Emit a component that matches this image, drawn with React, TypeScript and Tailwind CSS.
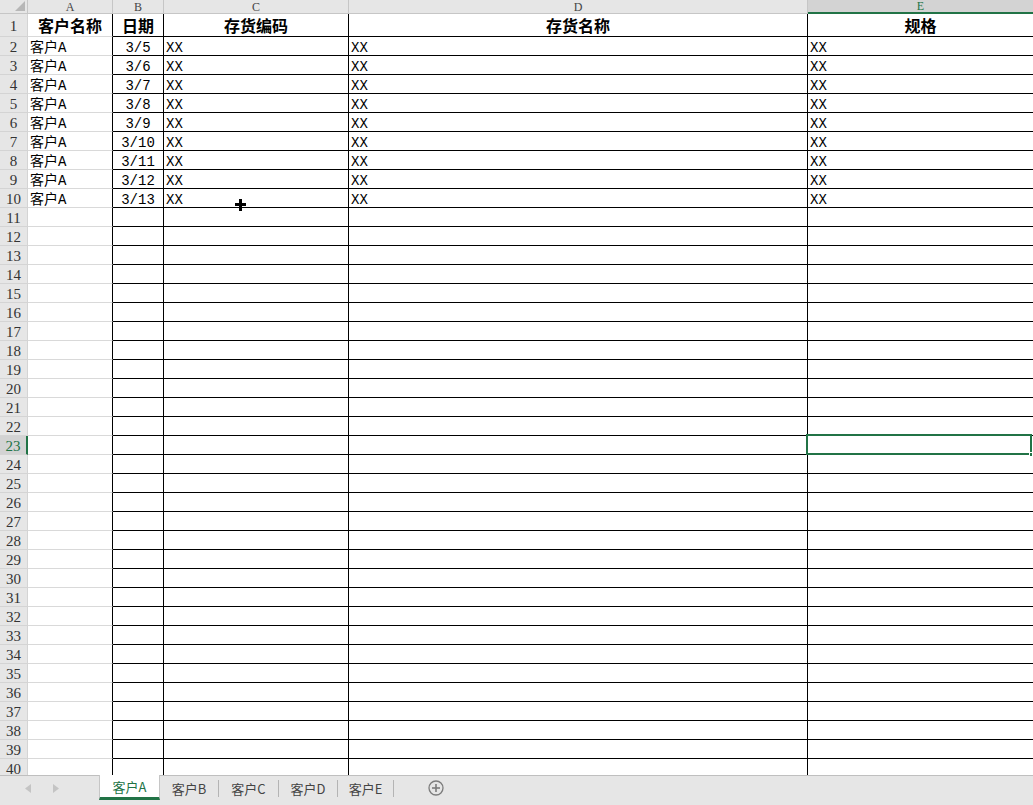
import React from "react";

function HeaderRow() {
  const cols = [
    { l: "A", w: "w-[85px]" },
    { l: "B", w: "w-[51px]" },
    { l: "C", w: "w-[185px]" },
    { l: "D", w: "w-[459px]" },
  ];
  return (
    <div className="flex h-[14px] shrink-0">
      <div className="relative w-[28px] h-full shrink-0 bg-[#e6e6e6] border-r border-b border-[#c6c6c6]">
        <svg className="absolute right-[2px] bottom-[2px]" width="10" height="10" viewBox="0 0 10 10">
          <polygon points="10,0 10,10 0,10" fill="#b7b7b7" />
        </svg>
      </div>
      {cols.map((c) => (
        <div
          key={c.l}
          className={`${c.w} h-full shrink-0 bg-[#e6e6e6] border-r border-b border-[#c6c6c6] flex items-center justify-center text-[12px] leading-none text-[#444] font-['Liberation_Serif',serif]`}
        >
          {c.l}
        </div>
      ))}
      <div className="flex-1 h-full bg-[#d3d3d3] border-b-2 border-[#217346] flex items-center justify-center text-[12px] leading-none text-[#217346] font-['Liberation_Serif',serif]">
        E
      </div>
    </div>
  );
}

const cellFont = "font-['Liberation_Mono','Noto_Sans_CJK_SC',monospace]";

function TitleRow() {
  const bold = "font-bold text-[16px] leading-none font-['Noto_Sans_CJK_SC',sans-serif] text-black";
  return (
    <div className="flex h-[23px] shrink-0">
      <div className="w-[28px] h-full shrink-0 bg-[#e6e6e6] border-r border-b border-[#d4d4d4] flex items-center justify-center pt-[3px] text-[15px] leading-none text-[#333] font-['Liberation_Serif',serif]">
        1
      </div>
      <div className={`w-[85px] h-full shrink-0 border-r border-r-black border-b border-b-[#d9d9d9] flex items-center justify-center ${bold}`}>
        客户名称
      </div>
      <div className={`w-[51px] h-full shrink-0 border-r border-b border-black flex items-center justify-center ${bold}`}>
        日期
      </div>
      <div className={`w-[185px] h-full shrink-0 border-r border-b border-black flex items-center justify-center ${bold}`}>
        存货编码
      </div>
      <div className={`w-[459px] h-full shrink-0 border-r border-b border-black flex items-center justify-center ${bold}`}>
        存货名称
      </div>
      <div className={`flex-1 h-full border-b border-black flex items-center justify-center ${bold}`}>
        规格
      </div>
    </div>
  );
}

function DataRow({ r }: { r: number }) {
  const has = r <= 10;
  const sel = r === 23;
  return (
    <div className="flex h-[19px] shrink-0">
      <div
        className={`w-[28px] h-full shrink-0 border-b border-[#d4d4d4] flex items-center justify-center pt-[3px] text-[15px] leading-none font-['Liberation_Serif',serif] ${
          sel ? "bg-[#d3d3d3] border-r-2 border-r-[#217346] text-[#217346]" : "bg-[#e6e6e6] border-r text-[#333]"
        }`}
      >
        {r}
      </div>
      <div className={`w-[85px] h-full shrink-0 border-r border-r-black border-b border-b-[#d9d9d9] flex items-center pl-[2px] pt-[3px] text-[14px] leading-none text-black ${cellFont}`}>
        {has ? "客户A" : ""}
      </div>
      <div className={`w-[51px] h-full shrink-0 border-r border-b border-black flex items-center justify-center pt-[3px] text-[14px] leading-none text-black ${cellFont}`}>
        {has ? `3/${r + 3}` : ""}
      </div>
      <div className={`w-[185px] h-full shrink-0 border-r border-b border-black flex items-center pl-[2px] pt-[3px] text-[14px] leading-none text-black ${cellFont}`}>
        {has ? "XX" : ""}
      </div>
      <div className={`w-[459px] h-full shrink-0 border-r border-b border-black flex items-center pl-[2px] pt-[3px] text-[14px] leading-none text-black ${cellFont}`}>
        {has ? "XX" : ""}
      </div>
      <div className={`relative flex-1 h-full border-b border-black flex items-center pl-[2px] pt-[3px] text-[14px] leading-none text-black ${cellFont}`}>
        {has ? "XX" : ""}
        {sel && (
          <>
            <div className="absolute left-[-2px] top-[-2px] right-[1px] bottom-[-1px] border-2 border-[#217346]" />
            <div className="absolute right-[0px] bottom-[-3px] w-[4px] h-[5px] bg-[#217346] border border-white" />
          </>
        )}
      </div>
    </div>
  );
}

function Tab({ label, w, active }: { label: string; w: string; active?: boolean }) {
  if (active) {
    return (
      <div className={`${w} h-[25px] shrink-0 bg-white border-l border-r border-[#c6c6c6] border-b-[3px] border-b-[#217346] mt-[-1px] flex items-center justify-center text-[13px] leading-none text-[#217346] font-['Noto_Sans_CJK_SC',sans-serif]`}>
        {label}
      </div>
    );
  }
  return (
    <div className={`${w} h-[24px] shrink-0 flex items-center`}>
      <div className="flex-1 flex items-center justify-center text-[13px] leading-none text-[#444] font-['Noto_Sans_CJK_SC',sans-serif]">
        {label}
      </div>
      <div className="w-px h-[17px] bg-[#b4b4b4]" />
    </div>
  );
}

function TabBar() {
  return (
    <div className="h-[30px] shrink-0 bg-[#e6e6e6] border-t border-[#bfbfbf] flex flex-col">
      <div className="flex items-start h-[25px]">
        <div className="w-[99px] h-[24px] shrink-0 flex items-center">
          <svg className="ml-[25px]" width="6" height="9" viewBox="0 0 6 9">
            <polygon points="6,0 6,9 0,4.5" fill="#c4c4c4" />
          </svg>
          <svg className="ml-[22px]" width="6" height="9" viewBox="0 0 6 9">
            <polygon points="0,0 0,9 6,4.5" fill="#c4c4c4" />
          </svg>
        </div>
        <Tab label="客户A" w="w-[61px]" active />
        <Tab label="客户B" w="w-[59px]" />
        <Tab label="客户C" w="w-[60px]" />
        <Tab label="客户D" w="w-[59px]" />
        <Tab label="客户E" w="w-[56px]" />
        <div className="h-[24px] flex items-center ml-[34px]">
          <svg width="16" height="16" viewBox="0 0 16 16">
            <circle cx="8" cy="8" r="7" fill="none" stroke="#7c7c7c" strokeWidth="1.3" />
            <line x1="8" y1="4" x2="8" y2="12" stroke="#7c7c7c" strokeWidth="1.6" />
            <line x1="4" y1="8" x2="12" y2="8" stroke="#7c7c7c" strokeWidth="1.6" />
          </svg>
        </div>
      </div>
    </div>
  );
}

export default function App() {
  const rows = Array.from({ length: 39 }, (_, i) => i + 2);
  return (
    <div className="w-[1033px] h-[805px] overflow-hidden bg-white flex flex-col">
      <div className="relative h-[775px] shrink-0 overflow-hidden flex flex-col">
        <HeaderRow />
        <TitleRow />
        {rows.map((r) => (
          <DataRow key={r} r={r} />
        ))}
        <svg className="absolute left-[235px] top-[199px]" width="11" height="12" viewBox="0 0 11 12">
          <path d="M4 0h3v4h4v3H7v5H4V7H0V4h4z" fill="#000" />
        </svg>
      </div>
      <TabBar />
    </div>
  );
}
